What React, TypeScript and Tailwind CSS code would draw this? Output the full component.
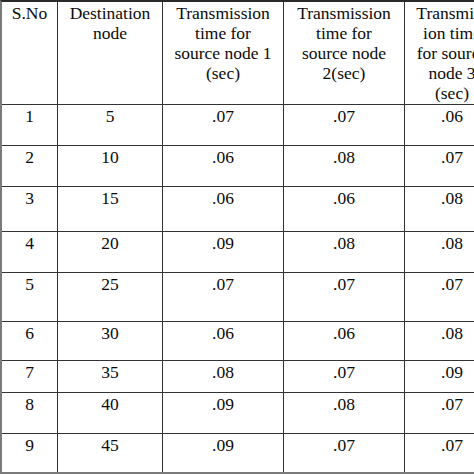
const rowHeights = [41, 41, 45, 41, 49, 39, 32, 41, 38];

const headers: string[][] = [
  ["S.No"],
  ["Destination", "node"],
  ["Transmission", "time for", "source node 1", "(sec)"],
  ["Transmission", "time for", "source node", "2(sec)"],
  ["Transmiss", "ion time", "for source", "node 3", "(sec)"],
];

const rows: string[][] = [
  ["1", "5", ".07", ".07", ".06"],
  ["2", "10", ".06", ".08", ".07"],
  ["3", "15", ".06", ".06", ".08"],
  ["4", "20", ".09", ".08", ".08"],
  ["5", "25", ".07", ".07", ".07"],
  ["6", "30", ".06", ".06", ".08"],
  ["7", "35", ".08", ".07", ".09"],
  ["8", "40", ".09", ".08", ".07"],
  ["9", "45", ".09", ".07", ".07"],
];

export default function App() {
  return (
    <div className="w-[474px] h-[474px] overflow-hidden bg-white">
      <div
        className="grid w-[500px] grid-cols-[56px_105px_121px_121px_95px] border-l-2 border-t-2 border-b-2 border-l-[#7a7a7a] border-t-[#2a2a2a] border-b-[#7a7a7a] text-[17.5px] leading-[20px] text-[#0a0a0a] text-center"
        style={{
          fontFamily: '"Liberation Serif", "Times New Roman", serif',
          gridTemplateRows: ["103px", ...rowHeights.map((h) => `${h}px`)].join(" "),
        }}
      >
        {headers.map((lines, i) => (
          <div key={i} className="border-r border-b border-[#333] pt-px">
            {lines.map((l, j) => (
              <div key={j} className="whitespace-nowrap">{l}</div>
            ))}
          </div>
        ))}
        {rows.map((row, r) =>
          row.map((cell, c) => (
            <div
              key={`${r}-${c}`}
              className={r === rows.length - 1 ? "border-r border-[#333] pt-px" : "border-r border-b border-[#333] pt-px"}
            >
              {cell}
            </div>
          ))
        )}
      </div>
    </div>
  );
}
